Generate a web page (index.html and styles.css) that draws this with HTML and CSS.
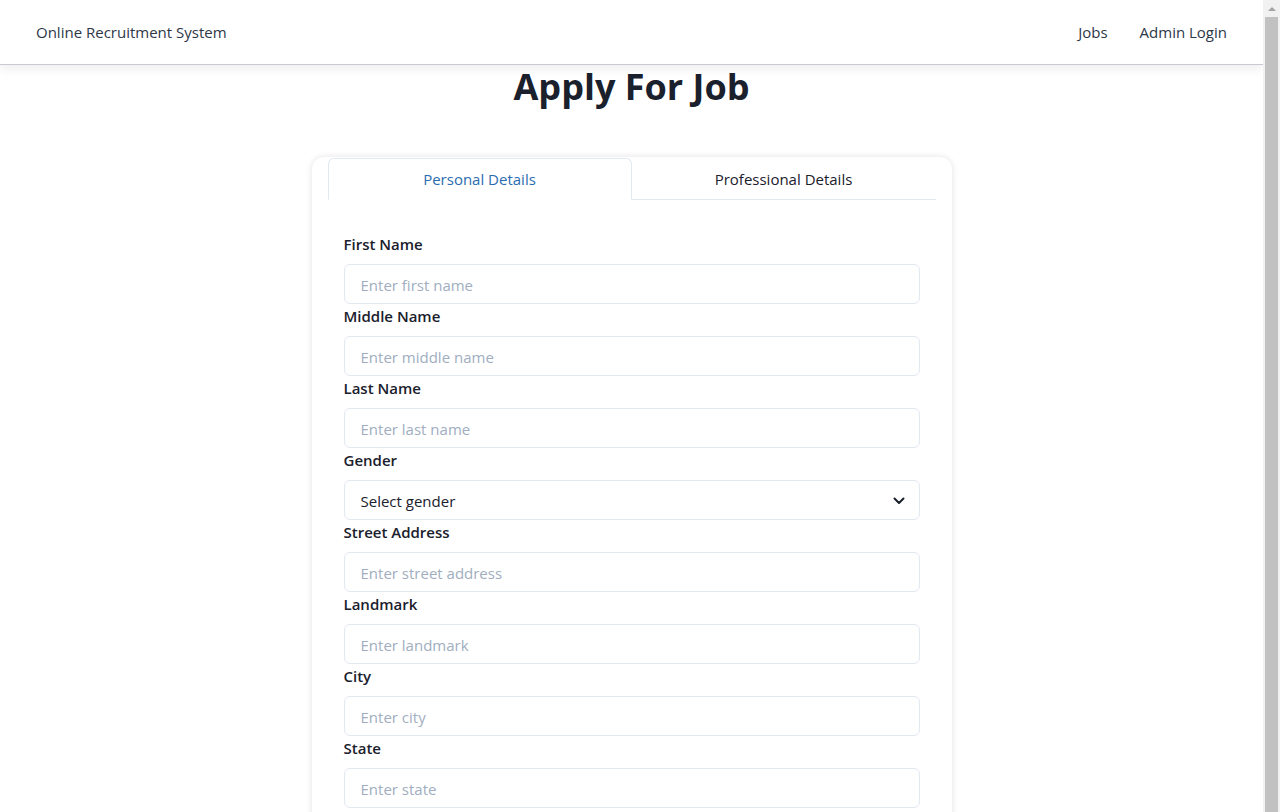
FILE: index.html
```html
<!DOCTYPE html>
<html lang="en">
<head>
<meta charset="utf-8">
<title>Apply For Job</title>
<link rel="stylesheet" href="styles.css">
</head>
<body>
<div class="window">
  <div class="page">
    <nav class="navbar">
      <span class="brand">Online Recruitment System</span>
      <div class="nav-links">
        <a class="nav-link">Jobs</a>
        <a class="nav-link">Admin Login</a>
      </div>
    </nav>
    <h1 class="title">Apply For Job</h1>
    <div class="card">
      <div class="tabs">
        <div class="tab active">Personal Details</div>
        <div class="tab">Professional Details</div>
      </div>
      <form class="panel">
        <div class="field">
          <label class="label">First Name</label>
          <input class="input" placeholder="Enter first name">
        </div>
        <div class="field">
          <label class="label">Middle Name</label>
          <input class="input" placeholder="Enter middle name">
        </div>
        <div class="field">
          <label class="label">Last Name</label>
          <input class="input" placeholder="Enter last name">
        </div>
        <div class="field">
          <label class="label">Gender</label>
          <div class="select">
            <span>Select gender</span>
            <svg class="chevron" width="12" height="8" viewBox="0 0 12 8"><path d="M1.5 1.5 L6 6 L10.5 1.5" fill="none" stroke="#1a202c" stroke-width="2" stroke-linecap="round" stroke-linejoin="round"/></svg>
          </div>
        </div>
        <div class="field">
          <label class="label">Street Address</label>
          <input class="input" placeholder="Enter street address">
        </div>
        <div class="field">
          <label class="label">Landmark</label>
          <input class="input" placeholder="Enter landmark">
        </div>
        <div class="field">
          <label class="label">City</label>
          <input class="input" placeholder="Enter city">
        </div>
        <div class="field">
          <label class="label">State</label>
          <input class="input" placeholder="Enter state">
        </div>
      </form>
    </div>
  </div>
  <div class="scrollbar">
    <div class="arrow"></div>
    <div class="thumb"></div>
  </div>
</div>
</body>
</html>
```

FILE: styles.css
```css
html, body {
  margin: 0;
  padding: 0;
  height: 100%;
  overflow: hidden;
  background: #ffffff;
}
body {
  font-family: "Open Sans", "Noto Sans", sans-serif;
  color: #1a202c;
}
.window {
  display: flex;
  height: 812px;
}
.page {
  flex: 1;
  overflow: hidden;
  display: flex;
  flex-direction: column;
  align-items: center;
}
.navbar {
  align-self: stretch;
  flex: none;
  height: 65px;
  box-sizing: border-box;
  padding: 0 36px;
  display: flex;
  align-items: center;
  justify-content: space-between;
  border-bottom: 1px solid #c8cad2;
  box-shadow: 0 4px 10px rgba(0, 0, 0, 0.07);
  font-size: 15px;
  color: #2d3748;
  position: relative;
  z-index: 1;
}
.nav-links {
  display: flex;
  gap: 32px;
}
.nav-link {
  color: #2d3748;
  text-decoration: none;
}
.title {
  margin: 0;
  font-size: 36px;
  line-height: 43px;
  font-weight: 700;
  color: #1a202c;
}
.card {
  flex: none;
  margin-top: 49px;
  width: 640px;
  box-sizing: border-box;
  padding: 1px 16px 0;
  border-radius: 12px;
  box-shadow: 0 0 6px rgba(0, 0, 0, 0.12);
  background: #fff;
}
.tabs {
  display: flex;
  border-bottom: 1px solid #e2e8f0;
}
.tab {
  flex: 1;
  height: 42px;
  box-sizing: border-box;
  display: flex;
  align-items: center;
  justify-content: center;
  font-size: 15px;
  color: #1a202c;
  border: 1px solid transparent;
  border-radius: 6px 6px 0 0;
  margin-bottom: -1px;
}
.tab.active {
  color: #2b6cb0;
  border-color: #e2e8f0;
  border-bottom-color: #fff;
}
.panel {
  padding: 32px 16px 40px;
  display: flex;
  flex-direction: column;
}
.field {
  display: flex;
  flex-direction: column;
}
.label {
  font-size: 15px;
  font-weight: 600;
  line-height: 24px;
  margin-bottom: 8px;
  color: #1a202c;
}
.input, .select {
  height: 40px;
  box-sizing: border-box;
  border: 1px solid #e2e8f0;
  border-radius: 6px;
  padding: 2px 16px 0;
  font-family: inherit;
  font-size: 15px;
  color: #1a202c;
  outline: none;
  background: #fff;
}
.input::placeholder {
  color: #a0aec0;
}
.select {
  display: flex;
  align-items: center;
  justify-content: space-between;
  padding-right: 14px;
}
.scrollbar {
  flex: none;
  width: 17px;
  background: #f1f1f1;
  display: flex;
  flex-direction: column;
  align-items: center;
}
.arrow {
  margin-top: 7px;
  width: 0;
  height: 0;
  border-left: 4px solid transparent;
  border-right: 4px solid transparent;
  border-bottom: 4px solid #a3a3a3;
}
.thumb {
  margin-top: 6px;
  width: 13px;
  flex: 1;
  background: #c1c1c1;
}
```
